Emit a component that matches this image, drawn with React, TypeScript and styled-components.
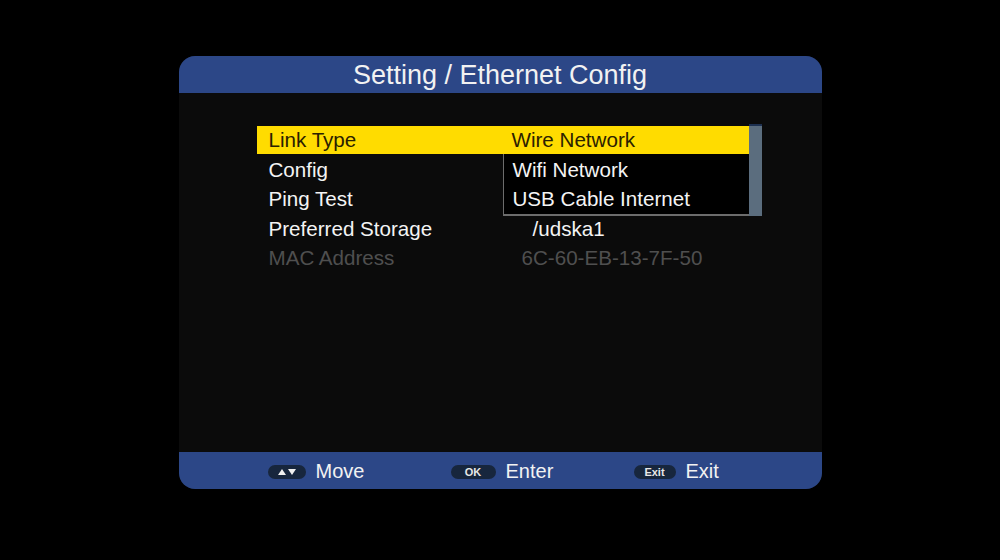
import React from "react";
import styled, { createGlobalStyle } from "styled-components";

const Global = createGlobalStyle`
  html, body { margin: 0; padding: 0; background: #000; }
  body { font-family: "Liberation Sans", Arial, sans-serif; }
`;

const Screen = styled.div`
  width: 1000px;
  height: 560px;
  background: #000;
  display: flex;
  justify-content: center;
  padding-top: 56px;
  box-sizing: border-box;
`;

const Panel = styled.div`
  width: 643px;
  height: 433px;
  display: flex;
  flex-direction: column;
  border-radius: 16px;
  overflow: hidden;
  background: #0b0b0b;
`;

const Header = styled.div`
  height: 37px;
  flex: none;
  background: #2c4787;
  color: #f2f2f2;
  font-size: 27px;
  display: flex;
  align-items: center;
  justify-content: center;
  padding-top: 1px;
  box-sizing: border-box;
`;

const Body = styled.div`
  flex: 1;
  padding: 33px 0 0 78px;
`;

const Menu = styled.div`
  position: relative;
  width: 493px;
  display: flex;
  flex-direction: column;
  gap: 1.5px;
`;

const Row = styled.div<{ $active?: boolean; $disabled?: boolean }>`
  height: 28px;
  display: flex;
  align-items: center;
  font-size: 20.6px;
  background: ${(p) => (p.$active ? "#ffdc00" : "transparent")};
  color: ${(p) => (p.$active ? "#2b2100" : p.$disabled ? "#4f4f4f" : "#f4f4f4")};
`;

const Label = styled.div`
  width: 246px;
  padding-left: 12px;
  box-sizing: border-box;
  white-space: nowrap;
`;

const Value = styled.div<{ $indent: number }>`
  padding-left: ${(p) => p.$indent}px;
  white-space: nowrap;
`;

const Dropdown = styled.div`
  position: absolute;
  left: 246px;
  top: 0;
  width: 246px;
  box-sizing: border-box;
  display: flex;
  flex-direction: column;
  gap: 1.5px;
  background: #000;
  border-left: 1px solid #6c6c6c;
  border-bottom: 2px solid #6c6c6c;
  padding-bottom: 0.5px;
`;

const Option = styled.div<{ $active?: boolean }>`
  height: 28px;
  display: flex;
  align-items: center;
  padding-left: 9px;
  margin-left: ${(p) => (p.$active ? "-1px" : "0")};
  font-size: 20.6px;
  white-space: nowrap;
  background: ${(p) => (p.$active ? "#ffdc00" : "#000")};
  color: ${(p) => (p.$active ? "#2b2100" : "#f4f4f4")};
`;

const Scrollbar = styled.div`
  position: absolute;
  left: 245px;
  top: -2px;
  width: 13px;
  bottom: -2px;
  background: #5b6d7e;
  border-top: 2px solid #1d3050;
  box-sizing: border-box;
`;

const Footer = styled.div`
  height: 37px;
  flex: none;
  background: #2c4787;
  display: flex;
  align-items: center;
  padding-left: 89px;
  padding-top: 2px;
  box-sizing: border-box;
`;

const Hint = styled.div`
  width: 183px;
  display: flex;
  align-items: center;
  gap: 10px;
  color: #f2f2f2;
  font-size: 20px;
`;

const Key = styled.span<{ $w: number }>`
  width: ${(p) => p.$w}px;
  height: 14px;
  border-radius: 7px;
  background: #17263d;
  color: #e8e8e8;
  font-size: 11px;
  font-weight: bold;
  display: inline-flex;
  align-items: center;
  justify-content: center;
`;

const Arrows = styled.svg`
  display: block;
`;

export default function App() {
  return (
    <>
      <Global />
      <Screen>
        <Panel>
          <Header>Setting / Ethernet Config</Header>
          <Body>
            <Menu>
              <Row $active>
                <Label>Link Type</Label>
              </Row>
              <Row>
                <Label>Config</Label>
              </Row>
              <Row>
                <Label>Ping Test</Label>
              </Row>
              <Row>
                <Label>Preferred Storage</Label>
                <Value $indent={30}>/udska1</Value>
              </Row>
              <Row $disabled>
                <Label>MAC Address</Label>
                <Value $indent={19}>6C-60-EB-13-7F-50</Value>
              </Row>
              <Dropdown>
                <Option $active>Wire Network</Option>
                <Option>Wifi Network</Option>
                <Option>USB Cable Internet</Option>
                <Scrollbar />
              </Dropdown>
            </Menu>
          </Body>
          <Footer>
            <Hint>
              <Key $w={38}>
                <Arrows width="18" height="8" viewBox="0 0 18 8">
                  <polygon points="0,7 4,1 8,7" fill="#f0f0f0" />
                  <polygon points="10,1 18,1 14,7" fill="#f0f0f0" />
                </Arrows>
              </Key>
              Move
            </Hint>
            <Hint>
              <Key $w={45}>OK</Key>
              Enter
            </Hint>
            <Hint>
              <Key $w={42}>Exit</Key>
              Exit
            </Hint>
          </Footer>
        </Panel>
      </Screen>
    </>
  );
}
